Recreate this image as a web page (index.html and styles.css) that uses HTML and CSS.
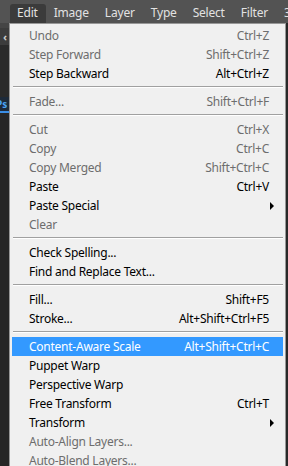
FILE: index.html
```html
<!DOCTYPE html>
<html>
<head>
<meta charset="utf-8">
<link rel="stylesheet" href="styles.css">
</head>
<body>
<div class="menubar">
  <span class="mb-item active">Edit</span>
  <span class="mb-item">Image</span>
  <span class="mb-item">Layer</span>
  <span class="mb-item">Type</span>
  <span class="mb-item">Select</span>
  <span class="mb-item">Filter</span>
  <span class="mb-item">3D</span>
</div>
<div class="main">
  <div class="side">
    <div class="side-band"></div>
    <div class="side-tools"><span class="chev">&#8249;</span></div>
    <div class="side-dark"></div>
    <div class="side-tab">Ps</div>
    <div class="side-line"></div>
    <div class="side-rest"></div>
  </div>
  <div class="menu">
    <div class="row dis"><span class="lbl">Undo</span><span class="sc">Ctrl+Z</span></div>
    <div class="row dis"><span class="lbl">Step Forward</span><span class="sc">Shift+Ctrl+Z</span></div>
    <div class="row"><span class="lbl">Step Backward</span><span class="sc">Alt+Ctrl+Z</span></div>
    <div class="sep"></div>
    <div class="row dis"><span class="lbl">Fade...</span><span class="sc">Shift+Ctrl+F</span></div>
    <div class="sep"></div>
    <div class="row dis"><span class="lbl">Cut</span><span class="sc">Ctrl+X</span></div>
    <div class="row dis"><span class="lbl">Copy</span><span class="sc">Ctrl+C</span></div>
    <div class="row dis"><span class="lbl">Copy Merged</span><span class="sc">Shift+Ctrl+C</span></div>
    <div class="row"><span class="lbl">Paste</span><span class="sc">Ctrl+V</span></div>
    <div class="row"><span class="lbl">Paste Special</span><span class="sub"></span></div>
    <div class="row dis"><span class="lbl">Clear</span></div>
    <div class="sep"></div>
    <div class="row"><span class="lbl">Check Spelling...</span></div>
    <div class="row"><span class="lbl">Find and Replace Text...</span></div>
    <div class="sep"></div>
    <div class="row"><span class="lbl">Fill...</span><span class="sc">Shift+F5</span></div>
    <div class="row"><span class="lbl">Stroke...</span><span class="sc">Alt+Shift+Ctrl+F5</span></div>
    <div class="sep"></div>
    <div class="row hl"><span class="lbl">Content-Aware Scale</span><span class="sc">Alt+Shift+Ctrl+C</span></div>
    <div class="row"><span class="lbl">Puppet Warp</span></div>
    <div class="row"><span class="lbl">Perspective Warp</span></div>
    <div class="row"><span class="lbl">Free Transform</span><span class="sc">Ctrl+T</span></div>
    <div class="row"><span class="lbl">Transform</span><span class="sub"></span></div>
    <div class="row dis"><span class="lbl">Auto-Align Layers...</span></div>
    <div class="row dis"><span class="lbl">Auto-Blend Layers...</span></div>
  </div>
</div>
</body>
</html>
```
FILE: styles.css
```css
html, body {
  margin: 0;
  padding: 0;
  width: 288px;
  height: 466px;
  overflow: hidden;
  background: #282828;
  font-family: "Noto Sans", "Open Sans", sans-serif;
  font-size: 12px;
}
.menubar {
  height: 23px;
  background: #535353;
  display: flex;
  align-items: flex-end;
  padding-left: 10px;
  white-space: nowrap;
  box-sizing: border-box;
  padding-top: 4px;
  overflow: hidden;
}
.mb-item {
  color: #e2e2e2;
  height: 19px;
  line-height: 18px;
  padding: 0 8px;
  box-sizing: border-box;
  letter-spacing: -0.2px;
  flex: none;
}
.mb-item.active {
  background: #3b3b3b;
  border-radius: 3px 3px 0 0;
  padding: 0 8px 0 7px;
}
.main {
  display: flex;
  height: 443px;
}
.side {
  width: 9px;
  display: flex;
  flex-direction: column;
  overflow: hidden;
}
.side-band { height: 5px; background: #454545; }
.side-tools {
  height: 17px;
  background: #3c3c3c;
  color: #d0d0d0;
  font-size: 11px;
  line-height: 17px;
  padding-left: 3px;
}
.chev { font-weight: bold; }
.side-dark { height: 52px; background: #2a2a2a; }
.side-tab {
  height: 14px;
  background: #1d2a3a;
  color: #4aa3f5;
  font-size: 10px;
  font-weight: bold;
  line-height: 14px;
  margin-left: -4px;
  white-space: nowrap;
}
.side-line { height: 2px; background: #3a8ee6; }
.side-rest { flex: 1; background: #262626; }
.menu {
  width: 277px;
  background: #f0f0f0;
  border: 1px solid #979797;
  box-sizing: border-box;
  padding: 2px 2px;
  height: 460px;
}
.row {
  height: 19px;
  display: flex;
  align-items: center;
  padding: 0 5px 0 17px;
  color: #000;
  white-space: nowrap;
  letter-spacing: -0.25px;
}
.row .lbl { flex: 1; }
.row .sc { margin-right: 9px; }
.row.dis { color: #6d6d6d; }
.row.hl { background: #3399ff; color: #fff; }
.sub {
  width: 0;
  height: 0;
  border-top: 4px solid transparent;
  border-bottom: 4px solid transparent;
  border-left: 4px solid #000;
  margin-right: 4px;
}
.sep {
  height: 9px;
  box-sizing: border-box;
  padding-top: 3px;
  margin-left: 1px;
}
.sep::before {
  content: "";
  display: block;
  height: 1px;
  background: #a0a0a0;
  border-bottom: 1px solid #ffffff;
}
```
